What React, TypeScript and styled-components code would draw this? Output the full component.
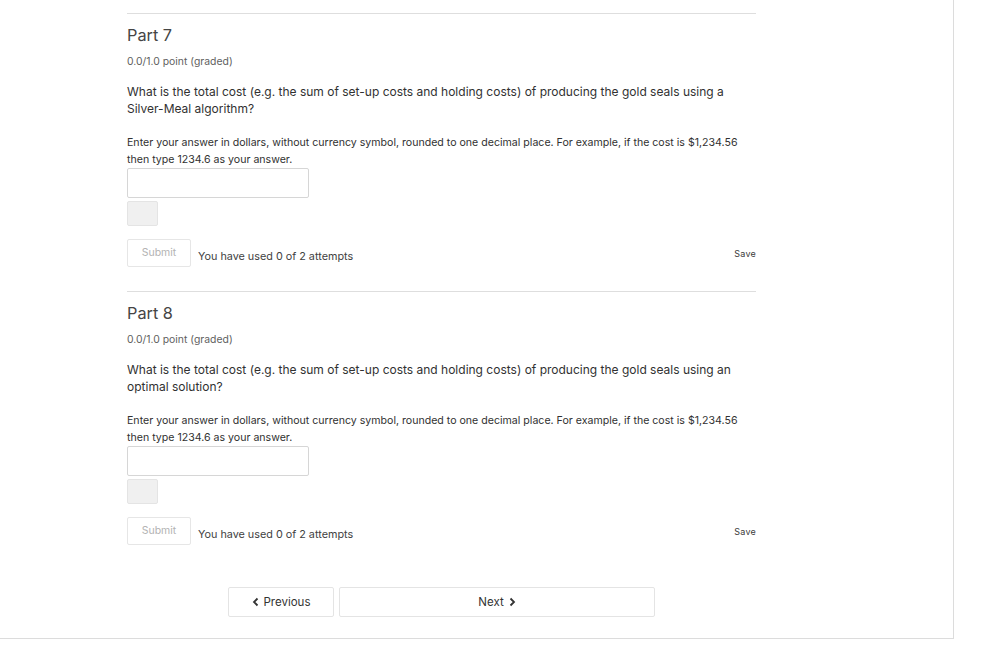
import React from "react";
import styled, { createGlobalStyle } from "styled-components";

const Global = createGlobalStyle`
  html, body { margin: 0; padding: 0; background: #ffffff; }
  body { font-family: Inter, "Open Sans", sans-serif; color: #313131; }
  * { box-sizing: border-box; }
`;

const Panel = styled.div`
  width: 954px;
  border-right: 1px solid #dcdcdc;
  border-bottom: 1px solid #dcdcdc;
  padding: 13px 0 21px 127px;
`;

const Content = styled.div`
  width: 629px;
`;

const Section = styled.section`
  border-top: 1px solid #dedede;
  padding-top: 10px;
  height: 278px;
`;

const Title = styled.h3`
  margin: 0;
  font-size: 16.3px;
  line-height: 22px;
  font-weight: 400;
  color: #454545;
`;

const Points = styled.div`
  margin-top: 9px;
  font-size: 10.4px;
  line-height: 14px;
  color: #5f5f5f;
`;

const Question = styled.p`
  margin: 14px 0 0;
  font-size: 12px;
  line-height: 17px;
  color: #313131;
  width: 620px;
`;

const Instructions = styled.p`
  margin: 17px 0 0;
  font-size: 10.6px;
  line-height: 17px;
  color: #313131;
  width: 629px;
`;

const Input = styled.input`
  display: block;
  width: 182px;
  height: 30px;
  margin: 0;
  border: 1px solid #d6d6d6;
  border-radius: 2px;
  background: #fff;
`;

const Status = styled.div`
  width: 31px;
  height: 25px;
  margin-top: 3px;
  background: #f0f0f0;
  border: 1px solid #e4e4e4;
  border-radius: 2px;
`;

const ActionRow = styled.div`
  margin-top: 13px;
  display: flex;
  align-items: center;
`;

const SubmitButton = styled.button`
  width: 64px;
  height: 28px;
  border: 1px solid #e6e6e6;
  border-radius: 2px;
  background: #fff;
  color: #b3b3b3;
  font-family: inherit;
  font-size: 10.5px;
  padding: 0 0 1px;
`;

const Attempts = styled.span`
  margin-left: 7px;
  font-size: 10.8px;
  color: #414141;
  padding-top: 6px;
`;

const SaveButton = styled.button`
  margin-left: auto;
  border: none;
  background: none;
  padding: 0;
  font-family: inherit;
  font-size: 9px;
  color: #3a3a3a;
  letter-spacing: 0.2px;
`;

const Nav = styled.nav`
  margin-top: 18px;
  display: flex;
  justify-content: center;
  gap: 5px;
`;

const NavButton = styled.button<{ $wide?: boolean }>`
  width: ${(p) => (p.$wide ? "316px" : "106px")};
  height: 30px;
  border: 1px solid #e4e4e4;
  border-radius: 2px;
  background: #fff;
  font-family: inherit;
  font-size: 11.5px;
  color: #333;
  display: flex;
  align-items: center;
  justify-content: center;
  gap: 4px;
`;

const Chevron = ({ dir }: { dir: "left" | "right" }) => (
  <svg width="8" height="10" viewBox="0 0 8 10">
    <path
      d={dir === "left" ? "M5.5 1.5 L2 5 L5.5 8.5" : "M2.5 1.5 L6 5 L2.5 8.5"}
      fill="none"
      stroke="#333"
      strokeWidth="1.8"
    />
  </svg>
);

const parts = [
  { n: 7, tail: "a", line2: "Silver-Meal algorithm?" },
  { n: 8, tail: "an", line2: "optimal solution?" },
];

export default function App() {
  return (
    <>
      <Global />
      <Panel>
        <Content>
          {parts.map((p) => (
            <Section key={p.n}>
              <Title>Part {p.n}</Title>
              <Points>0.0/1.0 point (graded)</Points>
              <Question>
                What is the total cost (e.g. the sum of set-up costs and holding costs) of producing the gold seals using {p.tail}
                <br />
                {p.line2}
              </Question>
              <Instructions>
                Enter your answer in dollars, without currency symbol, rounded to one decimal place. For example, if the cost is $1,234.56
                <br />
                then type 1234.6 as your answer.
              </Instructions>
              <Input type="text" aria-label={`Part ${p.n} answer`} />
              <Status />
              <ActionRow>
                <SubmitButton disabled>Submit</SubmitButton>
                <Attempts>You have used 0 of 2 attempts</Attempts>
                <SaveButton>Save</SaveButton>
              </ActionRow>
            </Section>
          ))}
          <Nav>
            <NavButton>
              <Chevron dir="left" /> Previous
            </NavButton>
            <NavButton $wide>
              Next <Chevron dir="right" />
            </NavButton>
          </Nav>
        </Content>
      </Panel>
    </>
  );
}
